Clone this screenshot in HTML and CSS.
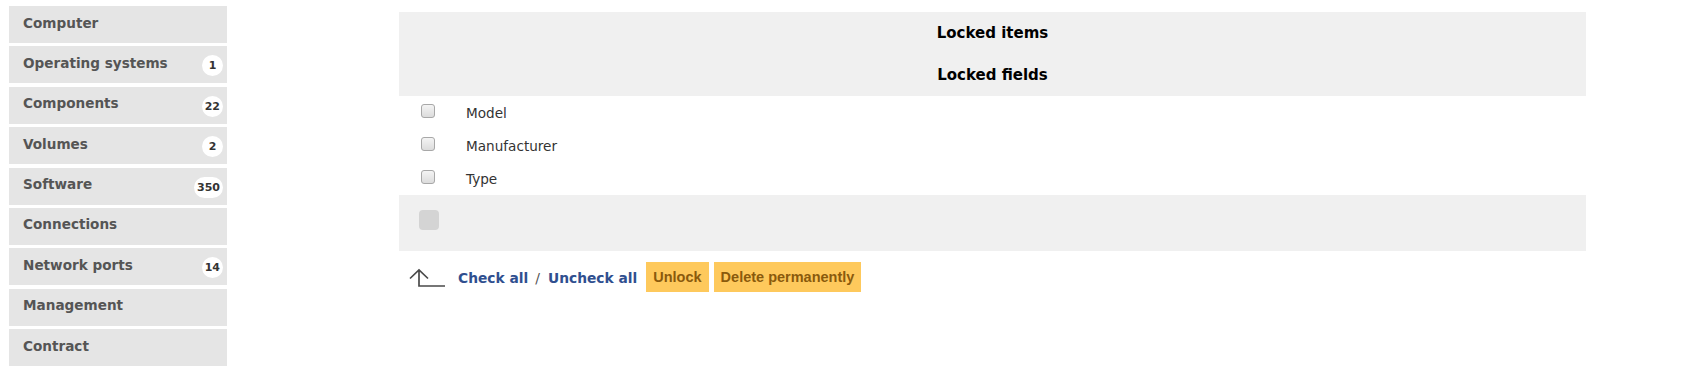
FILE: index.html
```html
<!DOCTYPE html>
<html>
<head>
<meta charset="utf-8">
<link rel="stylesheet" href="styles.css">
</head>
<body>
<div class="page">
  <ul class="tabs">
    <li class="tab"><span>Computer</span></li>
    <li class="tab"><span>Operating systems</span><b class="badge">1</b></li>
    <li class="tab"><span>Components</span><b class="badge">22</b></li>
    <li class="tab"><span>Volumes</span><b class="badge">2</b></li>
    <li class="tab"><span>Software</span><b class="badge">350</b></li>
    <li class="tab"><span>Connections</span></li>
    <li class="tab"><span>Network ports</span><b class="badge">14</b></li>
    <li class="tab"><span>Management</span></li>
    <li class="tab"><span>Contract</span></li>
  </ul>
  <div class="main">
    <table class="locks">
      <thead>
        <tr><th colspan="2">Locked items</th></tr>
        <tr><th colspan="2">Locked fields</th></tr>
      </thead>
      <tbody>
        <tr><td class="cb"><span class="check"></span></td><td>Model</td></tr>
        <tr><td class="cb"><span class="check"></span></td><td>Manufacturer</td></tr>
        <tr><td class="cb"><span class="check"></span></td><td>Type</td></tr>
        <tr class="foot"><td class="cb"><span class="check-all"></span></td><td></td></tr>
      </tbody>
    </table>
    <div class="actions">
      <svg class="arrow" width="38" height="20" viewBox="0 0 38 20">
        <path d="M11 2 V18 H37 M2 10.5 L11 2 L20 10.5" fill="none" stroke="#4a4a4a" stroke-width="1.7"/>
      </svg>
      <a class="link">Check all</a>
      <span class="sep">/</span>
      <a class="link">Uncheck all</a>
      <button class="btn">Unlock</button>
      <button class="btn">Delete permanently</button>
    </div>
  </div>
</div>
</body>
</html>
```

FILE: styles.css
```css
html, body {
  margin: 0;
  padding: 0;
  background: #fff;
  font-family: "DejaVu Sans", Verdana, sans-serif;
  font-size: 13px;
  color: #333;
}

.page {
  display: flex;
  align-items: flex-start;
}

.tabs {
  list-style: none;
  margin: 6px 0 0 9px;
  padding: 0;
  width: 218px;
  flex: none;
}

.tab {
  display: flex;
  align-items: center;
  justify-content: space-between;
  height: 37px;
  margin-bottom: 3.4px;
  padding: 0 4px 0 14px;
  box-sizing: border-box;
  background: #e5e5e5;
  color: #555;
  font-weight: bold;
  font-size: 13.6px;
}

.tab span {
  margin-top: -4px;
}

.badge {
  min-width: 21px;
  height: 21px;
  padding: 0 3px;
  box-sizing: border-box;
  border-radius: 11px;
  background: #fff;
  color: #333;
  font-size: 11px;
  line-height: 22px;
  text-align: center;
  margin-top: 2px;
}

.main {
  margin: 12px 0 0 172px;
  width: 1187px;
  flex: none;
}

.locks {
  width: 100%;
  border-collapse: collapse;
}

.locks th {
  background: #f0f0f0;
  color: #000;
  font-weight: bold;
  font-size: 15px;
  height: 42px;
  padding: 0;
  text-align: center;
}

.locks td {
  height: 33px;
  padding: 0;
  font-size: 13.6px;
  color: #333;
}

.locks td.cb {
  width: 67px;
  padding-left: 22px;
  box-sizing: border-box;
}

.check {
  display: block;
  width: 12px;
  height: 12px;
  border: 1px solid #a8a8a8;
  border-radius: 3px;
  background: linear-gradient(#f4f4f4, #dcdcdc);
  margin-top: -4px;
}

.locks tr.foot td {
  background: #f0f0f0;
  height: 56px;
}

.locks tr.foot td.cb {
  padding-left: 20px;
}

.check-all {
  display: block;
  width: 20px;
  height: 20px;
  border-radius: 4px;
  background: #d4d4d4;
  margin-top: -6px;
}

.actions {
  display: flex;
  align-items: center;
  margin-top: 11px;
  height: 30px;
}

.arrow {
  margin-left: 9px;
  margin-top: 1px;
}

.link {
  color: #2f4f8f;
  font-weight: bold;
  font-size: 13.8px;
  margin-left: 12px;
  margin-top: 2px;
}

.sep {
  color: #555;
  font-size: 14px;
  margin: 2px 8px 0 7px;
}

.sep + .link {
  margin-left: 0;
}

.btn {
  height: 30px;
  border: none;
  background: #fec95c;
  color: #8a5a0c;
  font-family: "Liberation Sans", Arial, sans-serif;
  font-weight: bold;
  font-size: 14.5px;
  padding: 0 7px;
  margin-left: 5px;
}

.link + .btn {
  margin-left: 9px;
}
```
